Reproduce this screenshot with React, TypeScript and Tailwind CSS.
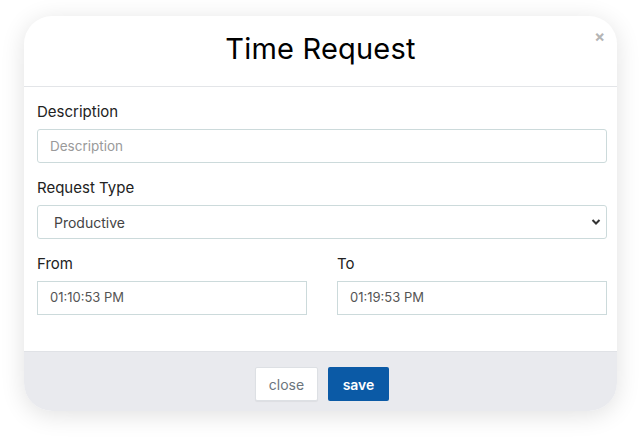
import React from "react";

export default function App() {
  const font = { fontFamily: "Inter, 'Noto Sans', sans-serif" };
  return (
    <div className="w-[641px] h-[444px] bg-white pt-[16px] pl-[24px]" style={font}>
      <div className="relative w-[593px] h-[395px] rounded-[28px] bg-white shadow-[0_4px_24px_rgba(0,0,0,0.12)] overflow-hidden flex flex-col">
        <button className="absolute right-[12px] top-[12px] text-[#b5b5b5] text-[16px] font-bold leading-none">×</button>
        <div className="h-[71px] border-b border-[#e3e5e8] flex items-center justify-center">
          <h1 className="text-[29px] text-black font-normal tracking-[0.2px] mt-[-4px]">Time Request</h1>
        </div>
        <div className="flex-1 pl-[13px] pr-[10px] pt-[15px]">
          <div className="text-[15px] text-[#222] leading-[20px]">Description</div>
          <input
            className="mt-[7px] w-full h-[34px] border border-[#ccdadb] rounded-[3px] px-[12px] text-[13.5px] text-[#333] placeholder:text-[#9a9a9a] outline-none"
            placeholder="Description"
          />
          <div className="mt-[15px] text-[15px] text-[#222] leading-[20px]">Request Type</div>
          <div className="relative mt-[7px] w-full h-[34px] border border-[#ccdadb] rounded-[3px] flex items-center px-[16px] text-[14px] text-[#444]">
            Productive
            <svg className="absolute right-[5px] top-[12px]" width="10" height="8" viewBox="0 0 10 8">
              <path d="M1.5 2 L5 5.5 L8.5 2" stroke="#333" strokeWidth="2" fill="none" />
            </svg>
          </div>
          <div className="mt-[15px] flex gap-[30px]">
            <div className="w-[270px]">
              <div className="text-[15px] text-[#222] leading-[20px]">From</div>
              <div className="mt-[7px] h-[34px] border border-[#ccdadb] flex items-center px-[12px] text-[13px] text-[#555]">01:10:53 PM</div>
            </div>
            <div className="w-[270px]">
              <div className="text-[15px] text-[#222] leading-[20px]">To</div>
              <div className="mt-[7px] h-[34px] border border-[#ccdadb] flex items-center px-[12px] text-[13px] text-[#555]">01:19:53 PM</div>
            </div>
          </div>
        </div>
        <div className="h-[60px] bg-[#e9eaee] border-t border-[#e0e2e6] flex items-start justify-center gap-[10px] pt-[15px] pl-[3px]">
          <button className="w-[63px] h-[34px] bg-white border border-[#dde0e4] rounded-[2px] text-[14px] text-[#6c757d] shadow-[0_1px_1px_rgba(0,0,0,0.05)]">close</button>
          <button className="w-[61px] h-[34px] bg-[#0b5aa6] rounded-[2px] text-[14px] font-semibold text-white">save</button>
        </div>
      </div>
    </div>
  );
}
